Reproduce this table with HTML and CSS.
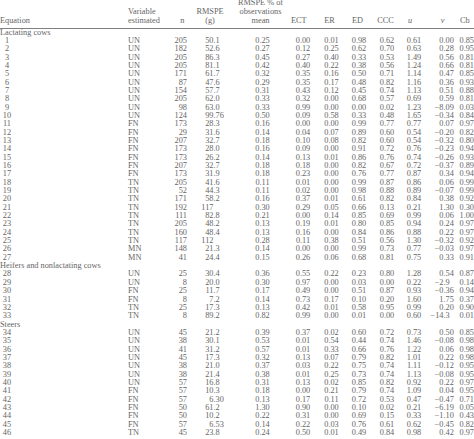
FILE: index.html
```html
<!DOCTYPE html>
<html lang="en">
<head>
<meta charset="utf-8">
<title>Equation evaluation table</title>
<link rel="stylesheet" href="styles.css">
</head>
<body>
<div class="table">
  <div class="head">
    <span class="h-eq">Equation</span>
    <span class="h-var">Variable<br>estimated</span>
    <span class="h-n">n</span>
    <span class="h-rm">RMSPE<br>(g)</span>
    <span class="h-pc">RMSPE % of<br>observations<br>mean</span>
    <span class="h-ect">ECT</span>
    <span class="h-er">ER</span>
    <span class="h-ed">ED</span>
    <span class="h-ccc">CCC</span>
    <span class="h-u">u</span>
    <span class="h-v">v</span>
    <span class="h-cb">Cb</span>
  </div>

  <div class="sec">Lactating cows</div>
  <div class="r"><span class="eq">1</span><span class="var">UN</span><span class="n">205</span><span class="rm"><span class="ip">50</span>.1</span><span class="pc">0.25</span><span>0.00</span><span>0.01</span><span>0.98</span><span>0.62</span><span>0.61</span><span class="v"><span class="ip">0</span>.00</span><span class="cb">0.85</span></div>
  <div class="r"><span class="eq">2</span><span class="var">UN</span><span class="n">182</span><span class="rm"><span class="ip">52</span>.6</span><span class="pc">0.27</span><span>0.12</span><span>0.25</span><span>0.62</span><span>0.70</span><span>0.63</span><span class="v"><span class="ip">0</span>.28</span><span class="cb">0.95</span></div>
  <div class="r"><span class="eq">3</span><span class="var">UN</span><span class="n">205</span><span class="rm"><span class="ip">86</span>.3</span><span class="pc">0.45</span><span>0.27</span><span>0.40</span><span>0.33</span><span>0.53</span><span>1.49</span><span class="v"><span class="ip">0</span>.56</span><span class="cb">0.81</span></div>
  <div class="r"><span class="eq">4</span><span class="var">UN</span><span class="n">205</span><span class="rm"><span class="ip">81</span>.1</span><span class="pc">0.42</span><span>0.40</span><span>0.22</span><span>0.38</span><span>0.56</span><span>1.24</span><span class="v"><span class="ip">0</span>.66</span><span class="cb">0.81</span></div>
  <div class="r"><span class="eq">5</span><span class="var">UN</span><span class="n">171</span><span class="rm"><span class="ip">61</span>.7</span><span class="pc">0.32</span><span>0.35</span><span>0.16</span><span>0.50</span><span>0.71</span><span>1.14</span><span class="v"><span class="ip">0</span>.47</span><span class="cb">0.85</span></div>
  <div class="r"><span class="eq">6</span><span class="var">UN</span><span class="n">87</span><span class="rm"><span class="ip">47</span>.6</span><span class="pc">0.29</span><span>0.35</span><span>0.17</span><span>0.48</span><span>0.82</span><span>1.16</span><span class="v"><span class="ip">0</span>.36</span><span class="cb">0.93</span></div>
  <div class="r"><span class="eq">7</span><span class="var">UN</span><span class="n">154</span><span class="rm"><span class="ip">57</span>.7</span><span class="pc">0.31</span><span>0.43</span><span>0.12</span><span>0.45</span><span>0.74</span><span>1.13</span><span class="v"><span class="ip">0</span>.51</span><span class="cb">0.88</span></div>
  <div class="r"><span class="eq">8</span><span class="var">UN</span><span class="n">205</span><span class="rm"><span class="ip">62</span>.0</span><span class="pc">0.33</span><span>0.32</span><span>0.00</span><span>0.68</span><span>0.57</span><span>0.69</span><span class="v"><span class="ip">0</span>.59</span><span class="cb">0.81</span></div>
  <div class="r"><span class="eq">9</span><span class="var">UN</span><span class="n">98</span><span class="rm"><span class="ip">63</span>.0</span><span class="pc">0.33</span><span>0.99</span><span>0.00</span><span>0.00</span><span>0.02</span><span>1.23</span><span class="v"><span class="ip">−8</span>.09</span><span class="cb">0.03</span></div>
  <div class="r"><span class="eq">10</span><span class="var">UN</span><span class="n">124</span><span class="rm"><span class="ip">99</span>.76</span><span class="pc">0.50</span><span>0.09</span><span>0.58</span><span>0.33</span><span>0.48</span><span>1.65</span><span class="v"><span class="ip">−0</span>.34</span><span class="cb">0.84</span></div>
  <div class="r"><span class="eq">11</span><span class="var">FN</span><span class="n">173</span><span class="rm"><span class="ip">28</span>.3</span><span class="pc">0.16</span><span>0.00</span><span>0.00</span><span>0.99</span><span>0.77</span><span>0.77</span><span class="v"><span class="ip">0</span>.07</span><span class="cb">0.97</span></div>
  <div class="r"><span class="eq">12</span><span class="var">FN</span><span class="n">29</span><span class="rm"><span class="ip">31</span>.6</span><span class="pc">0.14</span><span>0.04</span><span>0.07</span><span>0.89</span><span>0.60</span><span>0.54</span><span class="v"><span class="ip">−0</span>.20</span><span class="cb">0.82</span></div>
  <div class="r"><span class="eq">13</span><span class="var">FN</span><span class="n">207</span><span class="rm"><span class="ip">32</span>.7</span><span class="pc">0.18</span><span>0.10</span><span>0.08</span><span>0.82</span><span>0.60</span><span>0.54</span><span class="v"><span class="ip">−0</span>.32</span><span class="cb">0.80</span></div>
  <div class="r"><span class="eq">14</span><span class="var">FN</span><span class="n">173</span><span class="rm"><span class="ip">28</span>.0</span><span class="pc">0.16</span><span>0.09</span><span>0.00</span><span>0.91</span><span>0.72</span><span>0.76</span><span class="v"><span class="ip">−0</span>.23</span><span class="cb">0.94</span></div>
  <div class="r"><span class="eq">15</span><span class="var">FN</span><span class="n">173</span><span class="rm"><span class="ip">26</span>.2</span><span class="pc">0.14</span><span>0.13</span><span>0.01</span><span>0.86</span><span>0.76</span><span>0.74</span><span class="v"><span class="ip">−0</span>.26</span><span class="cb">0.93</span></div>
  <div class="r"><span class="eq">16</span><span class="var">FN</span><span class="n">207</span><span class="rm"><span class="ip">32</span>.7</span><span class="pc">0.18</span><span>0.18</span><span>0.00</span><span>0.82</span><span>0.67</span><span>0.72</span><span class="v"><span class="ip">−0</span>.37</span><span class="cb">0.89</span></div>
  <div class="r"><span class="eq">17</span><span class="var">FN</span><span class="n">173</span><span class="rm"><span class="ip">31</span>.9</span><span class="pc">0.18</span><span>0.23</span><span>0.00</span><span>0.76</span><span>0.77</span><span>0.87</span><span class="v"><span class="ip">0</span>.34</span><span class="cb">0.94</span></div>
  <div class="r"><span class="eq">18</span><span class="var">TN</span><span class="n">205</span><span class="rm"><span class="ip">41</span>.6</span><span class="pc">0.11</span><span>0.01</span><span>0.00</span><span>0.99</span><span>0.87</span><span>0.86</span><span class="v"><span class="ip">0</span>.06</span><span class="cb">0.99</span></div>
  <div class="r"><span class="eq">19</span><span class="var">TN</span><span class="n">52</span><span class="rm"><span class="ip">44</span>.3</span><span class="pc">0.11</span><span>0.02</span><span>0.00</span><span>0.98</span><span>0.88</span><span>0.89</span><span class="v"><span class="ip">−0</span>.07</span><span class="cb">0.99</span></div>
  <div class="r"><span class="eq">20</span><span class="var">TN</span><span class="n">171</span><span class="rm"><span class="ip">58</span>.2</span><span class="pc">0.16</span><span>0.37</span><span>0.01</span><span>0.61</span><span>0.82</span><span>0.84</span><span class="v"><span class="ip">0</span>.38</span><span class="cb">0.92</span></div>
  <div class="r"><span class="eq">21</span><span class="var">TN</span><span class="n">192</span><span class="rm"><span class="ip">117</span></span><span class="pc">0.30</span><span>0.29</span><span>0.05</span><span>0.66</span><span>0.13</span><span>0.21</span><span class="v"><span class="ip">1</span>.30</span><span class="cb">0.30</span></div>
  <div class="r"><span class="eq">22</span><span class="var">TN</span><span class="n">111</span><span class="rm"><span class="ip">82</span>.8</span><span class="pc">0.21</span><span>0.00</span><span>0.14</span><span>0.85</span><span>0.69</span><span>0.99</span><span class="v"><span class="ip">0</span>.06</span><span class="cb">1.00</span></div>
  <div class="r"><span class="eq">23</span><span class="var">TN</span><span class="n">205</span><span class="rm"><span class="ip">48</span>.2</span><span class="pc">0.13</span><span>0.19</span><span>0.01</span><span>0.80</span><span>0.85</span><span>0.94</span><span class="v"><span class="ip">0</span>.24</span><span class="cb">0.97</span></div>
  <div class="r"><span class="eq">24</span><span class="var">TN</span><span class="n">160</span><span class="rm"><span class="ip">48</span>.4</span><span class="pc">0.13</span><span>0.16</span><span>0.00</span><span>0.84</span><span>0.86</span><span>0.88</span><span class="v"><span class="ip">0</span>.22</span><span class="cb">0.97</span></div>
  <div class="r"><span class="eq">25</span><span class="var">TN</span><span class="n">117</span><span class="rm"><span class="ip">112</span></span><span class="pc">0.28</span><span>0.11</span><span>0.38</span><span>0.51</span><span>0.56</span><span>1.30</span><span class="v"><span class="ip">−0</span>.32</span><span class="cb">0.92</span></div>
  <div class="r"><span class="eq">26</span><span class="var">MN</span><span class="n">148</span><span class="rm"><span class="ip">21</span>.3</span><span class="pc">0.14</span><span>0.00</span><span>0.00</span><span>0.99</span><span>0.73</span><span>0.77</span><span class="v"><span class="ip">−0</span>.03</span><span class="cb">0.97</span></div>
  <div class="r"><span class="eq">27</span><span class="var">MN</span><span class="n">41</span><span class="rm"><span class="ip">24</span>.4</span><span class="pc">0.15</span><span>0.26</span><span>0.06</span><span>0.68</span><span>0.81</span><span>0.75</span><span class="v"><span class="ip">0</span>.33</span><span class="cb">0.91</span></div>

  <div class="sec">Heifers and nonlactating cows</div>
  <div class="r"><span class="eq">28</span><span class="var">UN</span><span class="n">25</span><span class="rm"><span class="ip">30</span>.4</span><span class="pc">0.36</span><span>0.55</span><span>0.22</span><span>0.23</span><span>0.80</span><span>1.28</span><span class="v"><span class="ip">0</span>.54</span><span class="cb">0.87</span></div>
  <div class="r"><span class="eq">29</span><span class="var">UN</span><span class="n">8</span><span class="rm"><span class="ip">20</span>.0</span><span class="pc">0.30</span><span>0.97</span><span>0.00</span><span>0.03</span><span>0.00</span><span>0.22</span><span class="v"><span class="ip">−2</span>.9</span><span class="cb">0.14</span></div>
  <div class="r"><span class="eq">30</span><span class="var">FN</span><span class="n">25</span><span class="rm"><span class="ip">11</span>.7</span><span class="pc">0.17</span><span>0.49</span><span>0.00</span><span>0.51</span><span>0.87</span><span>0.93</span><span class="v"><span class="ip">−0</span>.36</span><span class="cb">0.94</span></div>
  <div class="r"><span class="eq">31</span><span class="var">FN</span><span class="n">8</span><span class="rm"><span class="ip">7</span>.2</span><span class="pc">0.14</span><span>0.73</span><span>0.17</span><span>0.10</span><span>0.20</span><span>1.60</span><span class="v"><span class="ip">1</span>.75</span><span class="cb">0.37</span></div>
  <div class="r"><span class="eq">32</span><span class="var">TN</span><span class="n">25</span><span class="rm"><span class="ip">17</span>.3</span><span class="pc">0.13</span><span>0.42</span><span>0.01</span><span>0.58</span><span>0.95</span><span>0.99</span><span class="v"><span class="ip">0</span>.20</span><span class="cb">0.90</span></div>
  <div class="r"><span class="eq">33</span><span class="var">TN</span><span class="n">8</span><span class="rm"><span class="ip">89</span>.2</span><span class="pc">0.82</span><span>0.99</span><span>0.00</span><span>0.01</span><span>0.00</span><span>0.60</span><span class="v"><span class="ip">−14</span>.3</span><span class="cb">0.01</span></div>

  <div class="sec">Steers</div>
  <div class="r"><span class="eq">34</span><span class="var">UN</span><span class="n">45</span><span class="rm"><span class="ip">21</span>.2</span><span class="pc">0.39</span><span>0.37</span><span>0.02</span><span>0.60</span><span>0.72</span><span>0.73</span><span class="v"><span class="ip">0</span>.50</span><span class="cb">0.85</span></div>
  <div class="r"><span class="eq">35</span><span class="var">UN</span><span class="n">38</span><span class="rm"><span class="ip">30</span>.1</span><span class="pc">0.53</span><span>0.01</span><span>0.54</span><span>0.44</span><span>0.74</span><span>1.46</span><span class="v"><span class="ip">−0</span>.08</span><span class="cb">0.98</span></div>
  <div class="r"><span class="eq">36</span><span class="var">UN</span><span class="n">41</span><span class="rm"><span class="ip">31</span>.2</span><span class="pc">0.57</span><span>0.01</span><span>0.33</span><span>0.66</span><span>0.76</span><span>1.22</span><span class="v"><span class="ip">0</span>.06</span><span class="cb">0.98</span></div>
  <div class="r"><span class="eq">37</span><span class="var">UN</span><span class="n">45</span><span class="rm"><span class="ip">17</span>.3</span><span class="pc">0.32</span><span>0.13</span><span>0.07</span><span>0.79</span><span>0.82</span><span>1.01</span><span class="v"><span class="ip">0</span>.22</span><span class="cb">0.98</span></div>
  <div class="r"><span class="eq">38</span><span class="var">UN</span><span class="n">38</span><span class="rm"><span class="ip">21</span>.0</span><span class="pc">0.37</span><span>0.03</span><span>0.22</span><span>0.75</span><span>0.74</span><span>1.11</span><span class="v"><span class="ip">−0</span>.12</span><span class="cb">0.95</span></div>
  <div class="r"><span class="eq">39</span><span class="var">UN</span><span class="n">38</span><span class="rm"><span class="ip">21</span>.4</span><span class="pc">0.38</span><span>0.01</span><span>0.25</span><span>0.73</span><span>0.74</span><span>1.13</span><span class="v"><span class="ip">−0</span>.08</span><span class="cb">0.95</span></div>
  <div class="r"><span class="eq">40</span><span class="var">UN</span><span class="n">57</span><span class="rm"><span class="ip">16</span>.8</span><span class="pc">0.31</span><span>0.13</span><span>0.02</span><span>0.85</span><span>0.82</span><span>0.92</span><span class="v"><span class="ip">0</span>.22</span><span class="cb">0.97</span></div>
  <div class="r"><span class="eq">41</span><span class="var">FN</span><span class="n">57</span><span class="rm"><span class="ip">10</span>.3</span><span class="pc">0.18</span><span>0.00</span><span>0.21</span><span>0.79</span><span>0.74</span><span>1.09</span><span class="v"><span class="ip">0</span>.04</span><span class="cb">0.95</span></div>
  <div class="r"><span class="eq">42</span><span class="var">FN</span><span class="n">57</span><span class="rm"><span class="ip">6</span>.30</span><span class="pc">0.13</span><span>0.17</span><span>0.11</span><span>0.72</span><span>0.53</span><span>0.47</span><span class="v"><span class="ip">−0</span>.47</span><span class="cb">0.71</span></div>
  <div class="r"><span class="eq">43</span><span class="var">FN</span><span class="n">50</span><span class="rm"><span class="ip">61</span>.2</span><span class="pc">1.30</span><span>0.90</span><span>0.00</span><span>0.10</span><span>0.02</span><span>0.21</span><span class="v"><span class="ip">−6</span>.19</span><span class="cb">0.05</span></div>
  <div class="r"><span class="eq">44</span><span class="var">FN</span><span class="n">50</span><span class="rm"><span class="ip">10</span>.2</span><span class="pc">0.22</span><span>0.31</span><span>0.00</span><span>0.69</span><span>0.15</span><span>0.33</span><span class="v"><span class="ip">−1</span>.10</span><span class="cb">0.43</span></div>
  <div class="r"><span class="eq">45</span><span class="var">FN</span><span class="n">57</span><span class="rm"><span class="ip">6</span>.53</span><span class="pc">0.14</span><span>0.22</span><span>0.03</span><span>0.76</span><span>0.61</span><span>0.62</span><span class="v"><span class="ip">−0</span>.45</span><span class="cb">0.82</span></div>
  <div class="r"><span class="eq">46</span><span class="var">TN</span><span class="n">45</span><span class="rm"><span class="ip">23</span>.8</span><span class="pc">0.24</span><span>0.50</span><span>0.01</span><span>0.49</span><span>0.84</span><span>0.98</span><span class="v"><span class="ip">0</span>.42</span><span class="cb">0.97</span></div>
</div>
</body>
</html>
```

FILE: styles.css
```css
html, body {
  margin: 0;
  padding: 0;
  background: #ffffff;
  overflow: hidden;
}

.table {
  width: 490px;
  font-family: "Liberation Serif", "Times New Roman", serif;
  font-size: 8.3px;
  color: #666666;
  white-space: nowrap;
}

.head,
.r {
  display: grid;
  grid-template-columns: 124px 44px 20px 48px 52px 30px 27px 28px 28px 26px 31px 32px;
}

.head {
  margin-top: -0.7px;
  line-height: 8.7px;
  align-items: end;
  padding-bottom: 2.1px;
  border-bottom: 1px solid #808080;
}

.head > span { text-align: center; }
.head .h-eq { text-align: left; }
.head .h-var { text-align: left; padding-left: 4px; }
.head .h-n { text-align: right; padding-right: 3.5px; }
.head .h-rm { padding-right: 4px; }
.head .h-pc { padding-right: 3px; }
.head .h-ect { text-align: left; padding-left: 3px; }
.head .h-er { padding-right: 4px; }
.head .h-ed { padding-right: 3px; }
.head .h-ccc { padding-right: 3px; }
.head .h-u { font-style: italic; padding-right: 8px; }
.head .h-v { font-style: italic; }
.head .h-cb { text-align: left; padding-left: 2px; }

.sec,
.r {
  line-height: 8.35px;
  height: 8.35px;
}

.r > span { text-align: center; }
.r .eq { text-align: center; width: 14px; }
.r .var { text-align: left; padding-left: 4px; }
.r .n { text-align: right; padding-right: 1px; }
.r .rm { text-align: left; }
.r .rm .ip { display: inline-block; width: 25.5px; text-align: right; }
.r .pc { padding-left: 1px; }
.r .v { text-align: left; }
.r .v .ip { display: inline-block; width: 16.5px; text-align: right; }
.r .cb { text-align: left; padding-left: 1.5px; }
```
